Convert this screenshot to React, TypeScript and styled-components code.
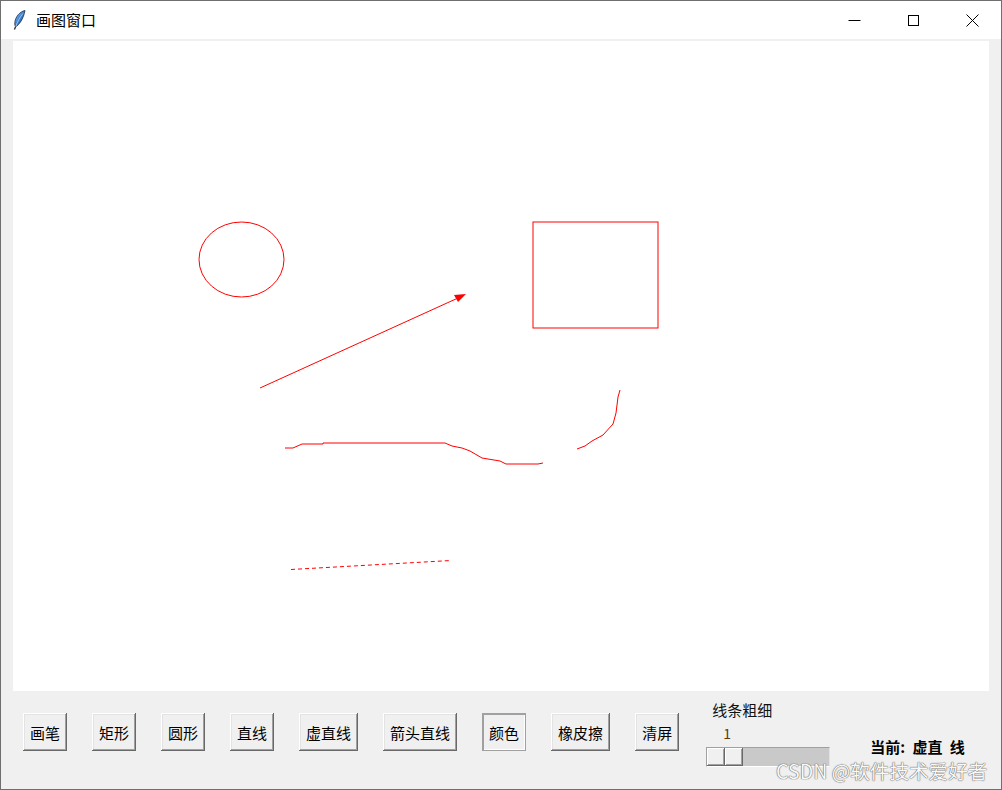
import * as React from 'react';
import styled, { createGlobalStyle } from 'styled-components';

const GlobalStyle = createGlobalStyle`
  html, body {
    margin: 0;
    padding: 0;
    background: #ffffff;
  }
  body {
    font-family: "Noto Sans CJK SC", "Liberation Sans", sans-serif;
  }
`;

const Window = styled.div`
  position: relative;
  box-sizing: border-box;
  width: 1002px;
  height: 790px;
  border: 1px solid #6f6f6f;
  background: #f0f0f0;
  display: flex;
  flex-direction: column;
  overflow: hidden;
`;

const TitleBar = styled.div`
  height: 38px;
  flex: none;
  background: #ffffff;
  display: flex;
  align-items: center;
`;

const AppIcon = styled.svg`
  width: 13px;
  height: 20px;
  margin-left: 12px;
  margin-top: -1px;
`;

const Title = styled.span`
  margin-left: 10px;
  font-size: 15px;
  color: #000;
  line-height: 20px;
`;

const Controls = styled.div`
  margin-left: auto;
  display: flex;
  height: 100%;
`;

const ControlButton = styled.div<{ $w: number }>`
  width: ${(p) => p.$w}px;
  height: 100%;
  display: flex;
  align-items: center;
  justify-content: center;
`;

const Body = styled.div`
  flex: 1;
  display: flex;
  flex-direction: column;
  padding: 2px 12px 0 12px;
`;

const Canvas = styled.svg`
  display: block;
  width: 976px;
  height: 650px;
  background: #ffffff;
  flex: none;
`;

const Toolbar = styled.div`
  flex: 1;
  display: flex;
  align-items: flex-start;
`;

const ButtonRow = styled.div`
  display: flex;
  gap: 25px;
  margin: 22px 0 0 10px;
`;

const ToolButton = styled.div<{ $sunken?: boolean }>`
  height: 38px;
  padding: 0 7px;
  display: flex;
  align-items: center;
  justify-content: center;
  font-size: 15px;
  color: #000;
  background: #f0f0f0;
  white-space: nowrap;
  box-shadow: ${(p) =>
    p.$sunken
      ? 'inset 1px 1px #a0a0a0, inset 2px 2px #a0a0a0, inset -1px -1px #a0a0a0, inset -2px -2px #ffffff'
      : 'inset -1px -1px #696969, inset 1px 1px #ffffff, inset -2px -2px #a0a0a0, inset 2px 2px #e3e3e3'};
`;

const SliderGroup = styled.div`
  display: flex;
  flex-direction: column;
  margin: 10px 0 0 27px;
  width: 124px;
`;

const SliderLabel = styled.div`
  font-size: 15px;
  line-height: 18px;
  color: #111;
  padding-left: 6px;
`;

const SliderValue = styled.div`
  font-size: 14px;
  line-height: 18px;
  color: #5a3a12;
  padding-left: 17px;
  margin-top: 5px;
`;

const Trough = styled.div`
  margin-top: 5px;
  height: 20px;
  box-sizing: border-box;
  background: #c9c9c9;
  border-top: 1px solid #a0a0a0;
  border-left: 1px solid #a0a0a0;
  border-bottom: 1px solid #ffffff;
  border-right: 1px solid #e3e3e3;
  display: flex;
`;

const Handle = styled.div`
  width: 18px;
  height: 18px;
  background: #f0f0f0;
  box-shadow: inset -1px -1px #696969, inset 1px 1px #ffffff, inset -2px -2px #a0a0a0;
`;

const Status = styled.div`
  margin: 46px 0 0 40px;
  font-size: 15px;
  line-height: 20px;
  font-weight: bold;
  word-spacing: 4px;
  color: #000;
  white-space: pre;
`;

const Watermark = styled.div`
  position: absolute;
  left: 775px;
  top: 758px;
  font-family: "Noto Sans CJK SC", "Liberation Sans", sans-serif;
  font-size: 19.6px;
  line-height: 24px;
  color: rgba(255, 255, 255, 0.97);
  text-shadow: 0 0 1px rgba(70, 70, 70, 0.9), 0 0 1px rgba(70, 70, 70, 0.9);
  white-space: nowrap;
`;

const tools = ['画笔', '矩形', '圆形', '直线', '虚直线', '箭头直线', '颜色', '橡皮擦', '清屏'];

const freehand =
  '285,448 293,448 302,444 323,444 323,443 445,443 452,446 462,448 470,451 482,458 488,459 500,461 506,464 538,464 543,463';
const curve = '577,449 585,446 592,441 603,435 613,424 616,413 618,397 620,390';

export default function App() {
  return (
    <>
      <GlobalStyle />
      <Window>
        <TitleBar>
          <AppIcon viewBox="0 0 13 20">
            <defs>
              <linearGradient id="fg" x1="0" y1="0" x2="1" y2="1">
                <stop offset="0" stopColor="#a8d0f5" />
                <stop offset="0.45" stopColor="#3f86d8" />
                <stop offset="1" stopColor="#1a3c78" />
              </linearGradient>
            </defs>
            <path
              d="M12 0.5 C 7 1.5, 2.5 6.5, 1.8 12.5 C 1.6 14.5, 2 16, 2.6 16.8 C 6 15, 10.5 9, 12 0.5 Z"
              fill="url(#fg)"
              stroke="#1d2f4a"
              strokeWidth="0.8"
            />
            <path d="M10 3.5 C 7 7, 4.5 11.5, 2.8 16.5" stroke="#dbeeff" strokeWidth="0.6" fill="none" />
            <path d="M2.6 16.8 L1.4 19.5" stroke="#222" strokeWidth="1.3" />
          </AppIcon>
          <Title>画图窗口</Title>
          <Controls>
            <ControlButton $w={57}>
              <svg width="13" height="13" viewBox="0 0 13 13">
                <path d="M0.5 6.5 H12.5" stroke="#000" strokeWidth="1" />
              </svg>
            </ControlButton>
            <ControlButton $w={60}>
              <svg width="13" height="13" viewBox="0 0 13 13">
                <rect x="1.5" y="1.5" width="10" height="10" fill="none" stroke="#000" strokeWidth="1" />
              </svg>
            </ControlButton>
            <ControlButton $w={58}>
              <svg width="13" height="13" viewBox="0 0 13 13">
                <path d="M0.5 0.5 L12.5 12.5 M12.5 0.5 L0.5 12.5" stroke="#000" strokeWidth="1" />
              </svg>
            </ControlButton>
          </Controls>
        </TitleBar>
        <Body>
          <Canvas viewBox="13 41 976 650">
            <ellipse cx="241.5" cy="259.5" rx="42.5" ry="37.5" fill="none" stroke="#ff0000" strokeWidth="1" />
            <rect x="533" y="222" width="125" height="106" fill="none" stroke="#ff0000" strokeWidth="1" />
            <line x1="260" y1="388" x2="458" y2="298" stroke="#ff0000" strokeWidth="1" />
            <polygon points="466,294 454,295 458,302" fill="#ff0000" />
            <polyline points={freehand} fill="none" stroke="#ff0000" strokeWidth="1" />
            <polyline points={curve} fill="none" stroke="#ff0000" strokeWidth="1" />
            <line
              x1="291"
              y1="569.5"
              x2="451"
              y2="560.5"
              stroke="#ff0000"
              strokeWidth="1"
              strokeDasharray="4 3"
            />
          </Canvas>
          <Toolbar>
            <ButtonRow>
              {tools.map((t) => (
                <ToolButton key={t} $sunken={t === '颜色'}>
                  {t}
                </ToolButton>
              ))}
            </ButtonRow>
            <SliderGroup>
              <SliderLabel>线条粗细</SliderLabel>
              <SliderValue>1</SliderValue>
              <Trough>
                <Handle />
                <Handle />
              </Trough>
            </SliderGroup>
            <Status>{'当前: 虚直 线'}</Status>
          </Toolbar>
        </Body>
        <Watermark>CSDN @软件技术爱好者</Watermark>
      </Window>
    </>
  );
}
